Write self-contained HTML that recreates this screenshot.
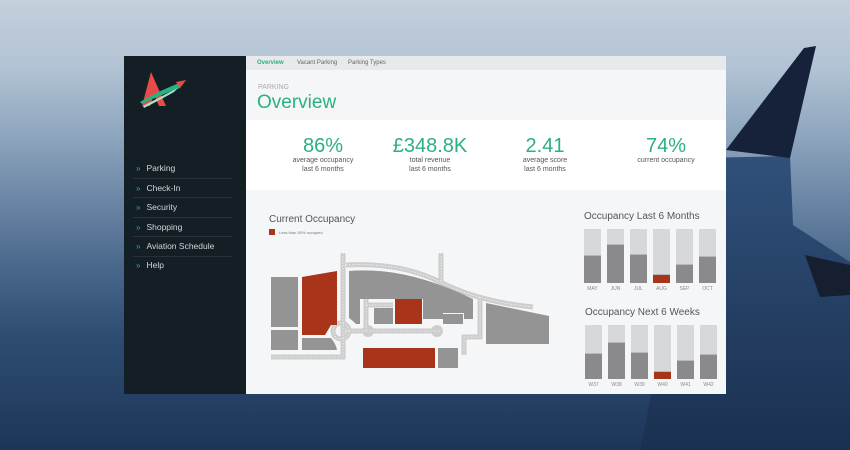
<!DOCTYPE html>
<html><head><meta charset="utf-8"><style>
*{margin:0;padding:0;box-sizing:border-box}
body{width:850px;height:450px;overflow:hidden;position:relative;font-family:"Liberation Sans",sans-serif;
background:linear-gradient(180deg,#c4d0dc 0%,#b2c3d4 15%,#8ea6be 30%,#6a85a4 45%,#4c6a8e 58%,#2e4c72 75%,#1c3658 100%)}
.abs{position:absolute}
.panel{left:124px;top:56px;width:602px;height:338px;background:#f5f6f8}
.side{left:124px;top:56px;width:122px;height:338px;background:#141f25}
.top{left:246px;top:56px;width:480px;height:14px;background:#e8e9ea;font-size:6px;color:#666}
.top span{position:absolute;top:4px}
.stats{left:246px;top:120px;width:480px;height:70px;background:#fff}
.st{position:absolute;text-align:center;width:120px;margin-left:-60px}
.st b{display:block;font-weight:normal;font-size:20px;color:#2bb07f;line-height:22px}
.st i{display:block;font-style:normal;font-size:7px;color:#555;line-height:8.5px}
.nav{position:absolute;left:133px;width:99px;height:19.5px;border-bottom:1px solid #26323a;font-size:8.5px;color:#d0d6d8;line-height:19px}
.nav:before{content:"»";color:#2bb07f;margin:0 6px 0 3px;font-size:8px}
.bar{position:absolute;width:17px;background:#d7d8da}
.bar div{position:absolute;bottom:0;left:0;width:100%;background:#8a8a8c;border-top:1px solid #b8b8ba}
.bar div.r{background:#a8341a}
.lb{position:absolute;font-size:5px;color:#888;width:17px;text-align:center}
h3{position:absolute;font-weight:normal;font-size:10px;color:#555}
</style></head><body>
<svg class="abs" style="left:0;top:0" width="850" height="450">
<defs><linearGradient id="w" x1="0" y1="0" x2="0" y2="1"><stop offset="0" stop-color="#30507a"/><stop offset="1" stop-color="#1a3050"/></linearGradient></defs>
<path d="M700 158 L790 156 L793 225 L850 262 L850 450 L640 450 Z" fill="url(#w)"/>
<path d="M726 150 L804 48 L816 46 L790 158 Z" fill="#15223a"/>
<path d="M805 255 L850 265 L850 295 L820 297 Z" fill="#161f30"/>
</svg>
<div class="abs panel"></div>
<div class="abs side"></div>
<svg class="abs" style="left:138px;top:70px" width="50" height="40">
<path d="M13 2 L4 36 L12 36 L16 24 L21 36 L28 36 Z" fill="#e84a4a"/>
<path d="M2 32 Q18 22 44 12 L48 10 L42 18 Q20 26 4 34 Z" fill="#2bb07f"/>
<path d="M5 36 Q20 28 40 18 L36 22 Q22 30 6 38 Z" fill="#a8e0c8"/>
<path d="M38 12 L48 10 L42 18 Z" fill="#e84a4a"/>
</svg>
<div class="nav" style="top:159px">Parking</div>
<div class="nav" style="top:178.5px">Check-In</div>
<div class="nav" style="top:198px">Security</div>
<div class="nav" style="top:217.5px">Shopping</div>
<div class="nav" style="top:237px">Aviation Schedule</div>
<div class="nav" style="top:256px;border:none">Help</div>
<div class="abs top"><span style="left:11px;color:#2bb07f;font-weight:bold">Overview</span><span style="left:51px">Vacant Parking</span><span style="left:102px">Parking Types</span></div>
<div class="abs" style="left:258px;top:84px;font-size:7px;color:#aaa">PARKING</div>
<div class="abs" style="left:257px;top:92px;font-size:19px;color:#2bb07f">Overview</div>
<div class="abs stats">
<div class="st" style="left:77px;top:15px"><b>86%</b><i>average occupancy</i><i>last 6 months</i></div>
<div class="st" style="left:184px;top:15px"><b>£348.8K</b><i>total revenue</i><i>last 6 months</i></div>
<div class="st" style="left:299px;top:15px"><b>2.41</b><i>average score</i><i>last 6 months</i></div>
<div class="st" style="left:420px;top:15px"><b>74%</b><i>current occupancy</i></div>
</div>
<h3 style="left:269px;top:214px">Current Occupancy</h3>
<div class="abs" style="left:269px;top:229px;width:6px;height:6px;background:#a8341a"></div>
<div class="abs" style="left:279px;top:230px;font-size:4px;color:#777">Less than 50% occupied</div>
<svg class="abs" style="left:0;top:0" width="850" height="450">
<g fill="none" stroke="#cdcdcd" stroke-width="5">
<path d="M343 253 V357 H271"/>
<path d="M346 265 Q400 262 440 282 T533 307"/>
<path d="M441 253 V282"/>
<path d="M480 297 V337 H464 V355"/>
<path d="M346 331 H440"/>
<path d="M366 299 V330 M366 305 H393"/>
<circle cx="341" cy="331" r="8" stroke-width="5"/>
<circle cx="368" cy="331" r="4" stroke-width="4"/>
<circle cx="437" cy="331" r="4" stroke-width="4"/>
</g>
<g fill="none" stroke="#f4f4f4" stroke-width="0.8" stroke-dasharray="1.5 1.5">
<path d="M343 253 V357 H271"/>
<path d="M346 265 Q400 262 440 282 T533 307"/>
<path d="M441 253 V282"/><path d="M480 297 V337 H464 V355"/>
<path d="M346 331 H440"/><path d="M366 299 V330 M366 305 H393"/>
<circle cx="341" cy="331" r="8"/>
</g>
<g fill="#949494">
<rect x="271" y="277" width="27" height="50"/>
<rect x="271" y="330" width="27" height="20"/>
<path d="M302 338 H331 Q336 344 337 350 H302 Z"/>
<path d="M349 271 Q405 266 473 299 V319 H464 V313 H443 V319 H423 V299 H360 V324 H356 Q352 320 349 318 Z"/>
<path d="M486 303 L549 316 V344 H486 Z"/>
<rect x="374" y="308" width="19" height="16"/>
<rect x="443" y="314" width="20" height="10"/>
<rect x="438" y="348" width="20" height="20"/>
</g>
<g fill="#a8341a">
<path d="M302 277 L337 271 V325 H331 L325 335 H302 Z"/>
<rect x="395" y="299" width="27" height="25"/>
<rect x="363" y="348" width="72" height="20"/>
</g>
</svg>
<h3 style="left:584px;top:211px">Occupancy Last 6 Months</h3>
<h3 style="left:585px;top:307px">Occupancy Next 6 Weeks</h3>
<div class="bar" style="left:584px;top:229px;height:54px"><div style="height:28px"></div></div>
<div class="bar" style="left:607px;top:229px;height:54px"><div style="height:39px"></div></div>
<div class="bar" style="left:630px;top:229px;height:54px"><div style="height:29px"></div></div>
<div class="bar" style="left:653px;top:229px;height:54px"><div class="r" style="height:9px"></div></div>
<div class="bar" style="left:676px;top:229px;height:54px"><div style="height:19px"></div></div>
<div class="bar" style="left:699px;top:229px;height:54px"><div style="height:27px"></div></div>
<div class="lb" style="left:584px;top:286px">MAY</div><div class="lb" style="left:607px;top:286px">JUN</div><div class="lb" style="left:630px;top:286px">JUL</div><div class="lb" style="left:653px;top:286px">AUG</div><div class="lb" style="left:676px;top:286px">SEP</div><div class="lb" style="left:699px;top:286px">OCT</div>
<div class="bar" style="left:585px;top:325px;height:54px"><div style="height:26px"></div></div>
<div class="bar" style="left:608px;top:325px;height:54px"><div style="height:37px"></div></div>
<div class="bar" style="left:631px;top:325px;height:54px"><div style="height:27px"></div></div>
<div class="bar" style="left:654px;top:325px;height:54px"><div class="r" style="height:8px"></div></div>
<div class="bar" style="left:677px;top:325px;height:54px"><div style="height:19px"></div></div>
<div class="bar" style="left:700px;top:325px;height:54px"><div style="height:25px"></div></div>
<div class="lb" style="left:585px;top:382px">W37</div><div class="lb" style="left:608px;top:382px">W38</div><div class="lb" style="left:631px;top:382px">W39</div><div class="lb" style="left:654px;top:382px">W40</div><div class="lb" style="left:677px;top:382px">W41</div><div class="lb" style="left:700px;top:382px">W42</div>
</body></html>
